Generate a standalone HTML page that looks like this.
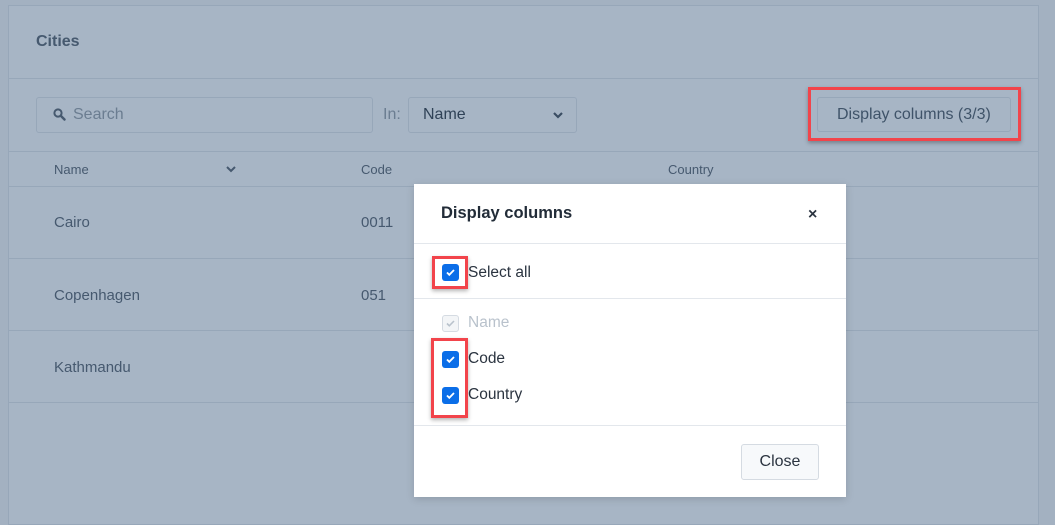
<!DOCTYPE html>
<html><head><style>
*{box-sizing:border-box;margin:0;padding:0}
body{width:1055px;height:512px;overflow:hidden;background:#a3b1c1;font-family:"Liberation Sans",sans-serif;position:relative}
.card{position:absolute;left:8px;top:5px;width:1031px;height:520px;background:#a7b5c5;border:1px solid #97a7b9}
.abs{position:absolute}
.line{position:absolute;left:9px;width:1029px;height:1px;background:#97a7b9}
.t{color:#46596f;font-size:15px}
.box{position:absolute;border:1px solid #97a7b9;border-radius:3px}
.modal{position:absolute;left:414px;top:184px;width:432px;height:313px;background:#fff;box-shadow:0 2px 8px rgba(0,0,0,.15)}
.cb{position:absolute;left:28px;width:17px;height:17px;border-radius:3px;background:#0b6ee8}
.cb svg{position:absolute;left:3px;top:3px}
.red{position:absolute;border:3px solid #f2444b;box-shadow:0 2px 4px rgba(0,0,0,.3)}
.lbl{position:absolute;left:54px;font-size:15.5px;color:#2b3440}
</style></head><body>
<div class="card"></div>
<div class="abs t" style="left:36px;top:33px;font-size:16px;font-weight:bold">Cities</div>
<div class="line" style="top:78px"></div>
<div class="box" style="left:36px;top:97px;width:337px;height:36px"></div>
<svg class="abs" style="left:53px;top:108px" width="13" height="13" viewBox="0 0 13 13"><circle cx="5" cy="5" r="3.6" fill="none" stroke="#46596f" stroke-width="2"/><path d="M8 8l3.5 3.5" stroke="#46596f" stroke-width="2.4" stroke-linecap="round"/></svg>
<div class="abs t" style="left:73px;top:106px;color:#6b7d91;font-size:16px">Search</div>
<div class="abs t" style="left:383px;top:106px;color:#6b7d91;font-size:16px">In:</div>
<div class="box" style="left:408px;top:97px;width:169px;height:36px"></div>
<div class="abs t" style="left:423px;top:106px;color:#2f4257;font-size:16px">Name</div>
<svg class="abs" style="left:552px;top:111px" width="12" height="9" viewBox="0 0 12 9"><path d="M2 2l4 4 4-4" fill="none" stroke="#3a4d63" stroke-width="2.2"/></svg>
<div class="box" style="left:817px;top:97px;width:194px;height:35px;"></div>
<div class="abs t" style="left:837px;top:106px;color:#3f5369;font-size:16px">Display columns (3/3)</div>
<div class="red" style="left:808px;top:87px;width:213px;height:54px"></div>
<div class="line" style="top:151px"></div>
<div class="abs t" style="left:54px;top:162px;font-size:13px">Name</div>
<svg class="abs" style="left:225px;top:165px" width="12" height="9" viewBox="0 0 12 9"><path d="M2 2l4 4 4-4" fill="none" stroke="#46596f" stroke-width="2"/></svg>
<div class="abs t" style="left:361px;top:162px;font-size:13px">Code</div>
<div class="abs t" style="left:668px;top:162px;font-size:13px">Country</div>
<div class="line" style="top:186px"></div>
<div class="abs t" style="left:54px;top:214px">Cairo</div>
<div class="abs t" style="left:361px;top:214px">0011</div>
<div class="line" style="top:258px"></div>
<div class="abs t" style="left:54px;top:287px">Copenhagen</div>
<div class="abs t" style="left:361px;top:287px">051</div>
<div class="line" style="top:330px"></div>
<div class="abs t" style="left:54px;top:359px">Kathmandu</div>
<div class="line" style="top:402px"></div>
<div class="modal">
 <div class="abs" style="left:27px;top:20px;font-size:16.5px;font-weight:bold;color:#222c38">Display columns</div>
 <div class="abs" style="left:394px;top:22px;font-size:16px;font-weight:bold;color:#2b3440">×</div>
 <div class="abs" style="left:0;top:59px;width:432px;height:1px;background:#e3e7ec"></div>
 <div class="cb" style="top:80px"><svg width="11" height="11" viewBox="0 0 11 11"><path d="M2 5.5l2.3 2.3L9 3" fill="none" stroke="#fff" stroke-width="1.8"/></svg></div>
 <div class="lbl" style="top:80px">Select all</div>
 <div class="abs" style="left:0;top:114px;width:432px;height:1px;background:#e3e7ec"></div>
 <div class="cb" style="top:131px;background:#f3f5f7;border:1px solid #d5dbe2"><svg width="11" height="11" viewBox="0 0 11 11" style="left:2px;top:2px"><path d="M2 5.5l2.3 2.3L9 3" fill="none" stroke="#b9c2cc" stroke-width="1.6"/></svg></div>
 <div class="lbl" style="top:130px;color:#b9c2cc">Name</div>
 <div class="cb" style="top:167px"><svg width="11" height="11" viewBox="0 0 11 11"><path d="M2 5.5l2.3 2.3L9 3" fill="none" stroke="#fff" stroke-width="1.8"/></svg></div>
 <div class="lbl" style="top:166px">Code</div>
 <div class="cb" style="top:203px"><svg width="11" height="11" viewBox="0 0 11 11"><path d="M2 5.5l2.3 2.3L9 3" fill="none" stroke="#fff" stroke-width="1.8"/></svg></div>
 <div class="lbl" style="top:202px">Country</div>
 <div class="abs" style="left:0;top:241px;width:432px;height:1px;background:#e3e7ec"></div>
 <div class="abs" style="left:327px;top:260px;width:78px;height:36px;border:1px solid #d5dbe2;border-radius:3px;background:#f7f9fb;font-size:16px;color:#2b3440;text-align:center;line-height:34px">Close</div>
</div>
<div class="red" style="left:432px;top:256px;width:36px;height:33px"></div>
<div class="red" style="left:431px;top:338px;width:37px;height:80px"></div>
</body></html>
